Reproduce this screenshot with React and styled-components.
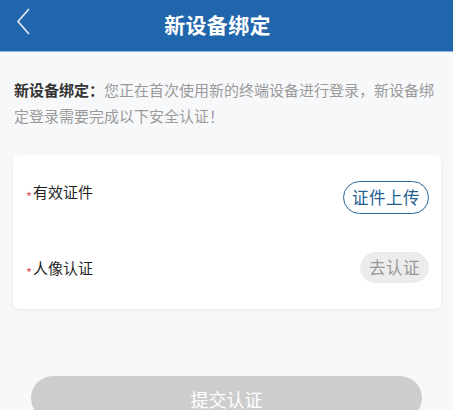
import React from "react";
import styled, { createGlobalStyle } from "styled-components";

const Global = createGlobalStyle`
  html, body { margin: 0; padding: 0; background: #f7f8fa; }
  body { font-family: "Noto Sans CJK SC", "Noto Sans", sans-serif; }
  * { box-sizing: border-box; }
`;

const Page = styled.div`
  width: 453px;
  height: 410px;
  overflow: hidden;
  background: #f7f8fa;
  display: flex;
  flex-direction: column;
  & > * { flex: none; }
`;

const Header = styled.header`
  position: relative;
  height: 52px;
  background: #2166ad;
  border-bottom: 1px solid #8db5de;
  display: flex;
  align-items: center;
  justify-content: center;
`;

const Back = styled.button`
  position: absolute;
  left: 12px;
  top: 6px;
  width: 26px;
  height: 32px;
  padding: 0;
  border: 0;
  background: none;
  display: flex;
`;

const Title = styled.h1`
  margin: 0 18px 4px 0;
  color: #fff;
  font-size: 21px;
  font-weight: 700;
  letter-spacing: 0.3px;
`;

const Intro = styled.p`
  margin: 0;
  padding: 25px 14px 0 14px;
  font-size: 15px;
  line-height: 26px;
  color: #9a9a9a;
`;

const Strong = styled.span`
  color: #333;
  font-weight: 700;
`;

const Card = styled.section`
  margin: 26px 12px 0 13px;
  height: 154px;
  background: #fff;
  border-radius: 6px;
  box-shadow: 0 1px 3px rgba(0, 0, 0, 0.06);
  padding: 26px 12px 0 13px;
  display: flex;
  flex-direction: column;
  gap: 38px;
`;

const Row = styled.div`
  display: flex;
  justify-content: space-between;
  align-items: ${(p) => p.$align || "center"};
`;

const Label = styled.span`
  display: flex;
  align-items: flex-end;
  font-size: 15px;
  line-height: 22px;
  color: #1f1f1f;
`;

const Star = styled.i`
  font-style: normal;
  color: #d9575e;
  font-size: 13px;
  line-height: 10px;
  width: 7px;
  margin-bottom: 1px;
`;

const Pill = styled.button`
  height: ${(p) => (p.$ghost ? 31 : 33)}px;
  padding: 0 8px;
  border-radius: 17px;
  font-family: inherit;
  font-size: 16.5px;
  line-height: 1;
  border: 1px solid ${(p) => (p.$ghost ? "#ececec" : "#2a6596")};
  background: ${(p) => (p.$ghost ? "#ececec" : "#fff")};
  color: ${(p) => (p.$ghost ? "#999" : "#245f91")};
  letter-spacing: 0.5px;
`;

const Submit = styled.button`
  margin: 67px 31px 0 31px;
  height: 44px;
  border: 0;
  border-radius: 22px;
  background: #cdcdcd;
  color: #fff;
  font-family: inherit;
  font-size: 18px;
  padding-top: 2px;
`;

export default function App() {
  return (
    <>
      <Global />
      <Page>
        <Header>
          <Back aria-label="back">
            <svg width="26" height="32" viewBox="0 0 26 32">
              <polyline
                points="17,3 6,15.5 17,28"
                fill="none"
                stroke="#e6f0fa"
                strokeWidth="1.6"
              />
            </svg>
          </Back>
          <Title>新设备绑定</Title>
        </Header>
        <Intro>
          <Strong>新设备绑定：</Strong>
          您正在首次使用新的终端设备进行登录，新设备绑定登录需要完成以下安全认证！
        </Intro>
        <Card>
          <Row $align="flex-start">
            <Label>
              <Star>*</Star>有效证件
            </Label>
            <Pill>证件上传</Pill>
          </Row>
          <Row>
            <Label>
              <Star>*</Star>人像认证
            </Label>
            <Pill $ghost>去认证</Pill>
          </Row>
        </Card>
        <Submit>提交认证</Submit>
      </Page>
    </>
  );
}
